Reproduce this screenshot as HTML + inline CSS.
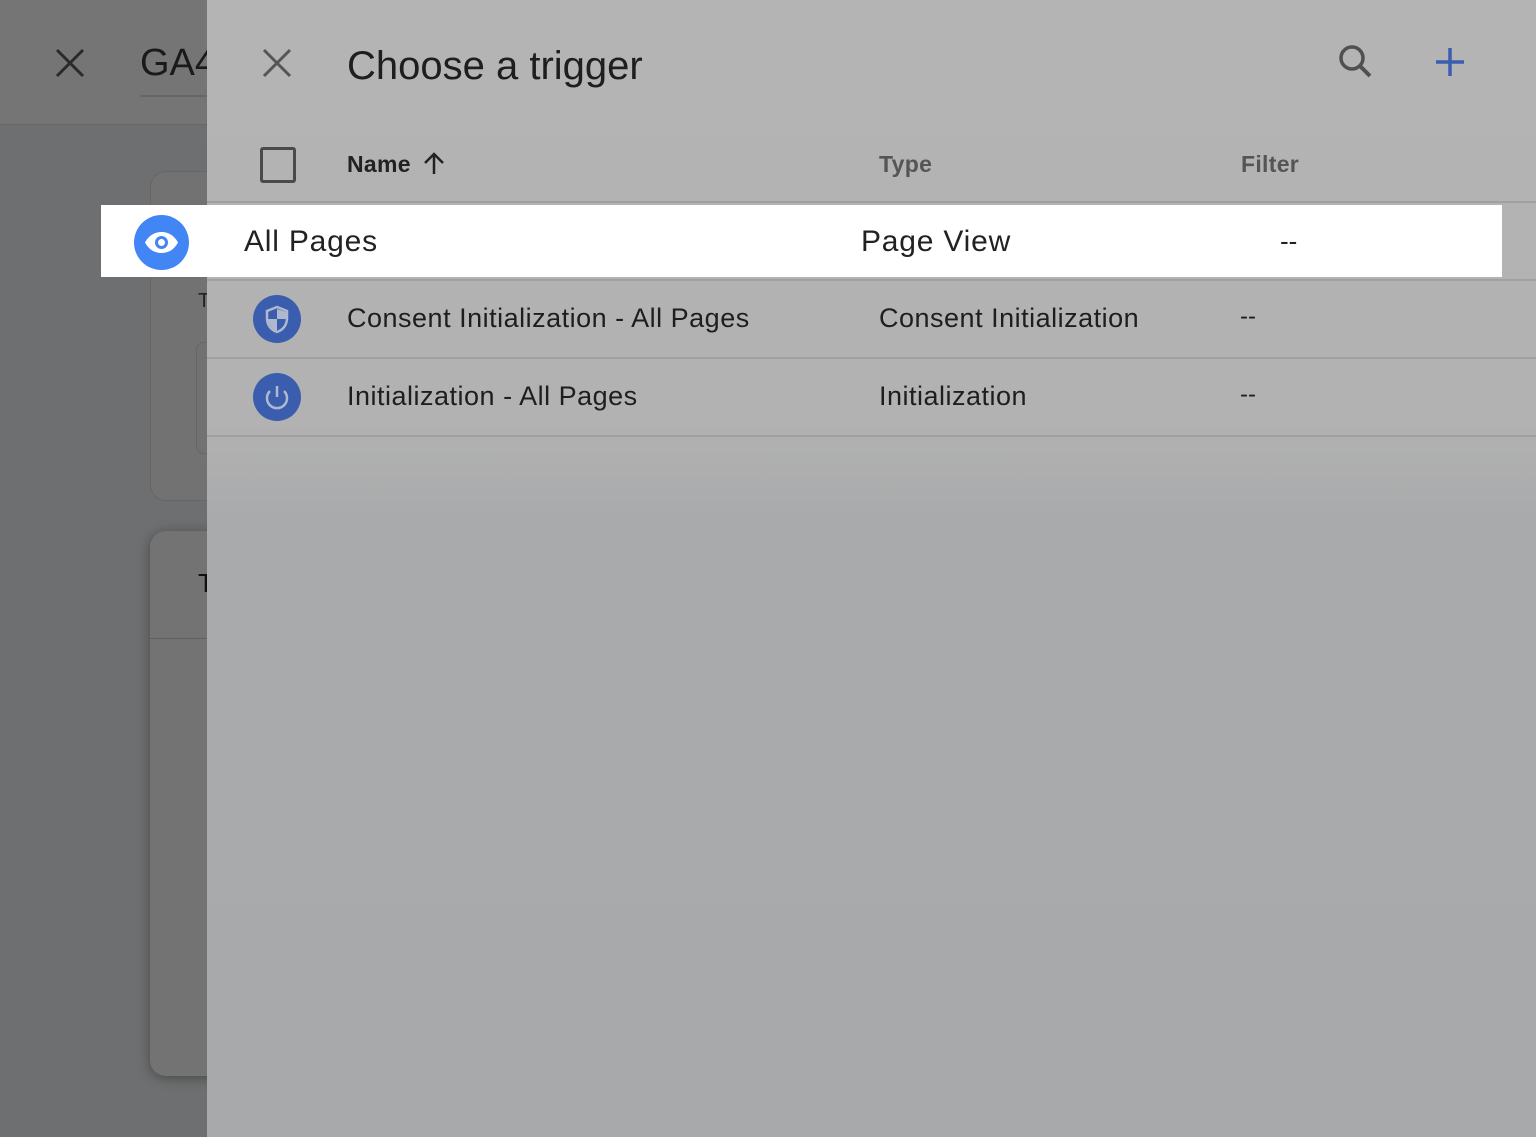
<!DOCTYPE html>
<html><head><meta charset="utf-8"><style>
html,body{margin:0;padding:0;width:1536px;height:1137px;overflow:hidden;font-family:"Liberation Sans",sans-serif;}
body{position:relative;background:#6e6f70;}
.abs{position:absolute;}
</style></head><body>
<div class="abs" style="left:0;top:0;width:207px;height:124px;background:#757575;border-bottom:1px solid #666;"></div>
<svg class="abs" style="left:52px;top:45px" width="36" height="36" viewBox="0 0 36 36"><path d="M5 5L31 31M31 5L5 31" stroke="#2a2a2a" stroke-width="3"/></svg>
<div class="abs" style="left:140px;top:42px;font-size:38px;color:#1a1a1a;">GA4</div>
<div class="abs" style="left:140px;top:95px;width:67px;height:2px;background:#666;"></div>
<div class="abs" style="left:150px;top:171px;width:80px;height:328px;border:1px solid #666;border-radius:16px;background:#727272;"></div>
<div class="abs" style="left:196px;top:342px;width:30px;height:110px;border:1px solid #666;border-radius:8px;"></div>
<div class="abs" style="left:198px;top:290px;font-size:20px;color:#222;">T</div>
<div class="abs" style="left:150px;top:531px;width:80px;height:545px;border-radius:16px;background:#737373;box-shadow:0 2px 12px rgba(0,0,0,.35);"></div>
<div class="abs" style="left:150px;top:638px;width:60px;height:1px;background:#5f5f5f;"></div>
<div class="abs" style="left:198px;top:568px;font-size:26px;color:#111;">T</div>
<div class="abs" style="left:207px;top:0;width:1329px;height:1137px;background:linear-gradient(#b4b4b4 0,#b2b2b2 420px,#a9aaab 520px,#a8a9ab 100%);"></div>
<svg class="abs" style="left:259px;top:45px" width="36" height="36" viewBox="0 0 36 36"><path d="M5 5L31 31M31 5L5 31" stroke="#555" stroke-width="3"/></svg>
<div class="abs" style="left:347px;top:44px;font-size:40px;color:#1e1e1e;">Choose a trigger</div>
<svg class="abs" style="left:1336px;top:42px" width="40" height="40" viewBox="0 0 40 40"><circle cx="16" cy="16" r="11" fill="none" stroke="#505050" stroke-width="3.5"/><path d="M24 24L34 34" stroke="#505050" stroke-width="4"/></svg>
<svg class="abs" style="left:1432px;top:44px" width="36" height="36" viewBox="0 0 36 36"><path d="M18 4V32M4 18H32" stroke="#3a5ead" stroke-width="3.5"/></svg>
<div class="abs" style="left:260px;top:147px;width:30px;height:30px;border:3px solid #4a4a4a;border-radius:3px;"></div>
<div class="abs" style="left:347px;top:151px;font-size:23px;font-weight:bold;color:#222;letter-spacing:0.3px;">Name</div>
<svg class="abs" style="left:422px;top:150px" width="24" height="26" viewBox="0 0 24 26"><path d="M12 24V4M3 13L12 4L21 13" stroke="#222" stroke-width="2.5" fill="none"/></svg>
<div class="abs" style="left:879px;top:151px;font-size:23px;font-weight:bold;color:#555;letter-spacing:0.3px;">Type</div>
<div class="abs" style="left:1241px;top:151px;font-size:23px;font-weight:bold;color:#555;letter-spacing:0.3px;">Filter</div>
<div class="abs" style="left:207px;top:201px;width:1329px;height:2px;background:#a0a0a0;"></div>
<div class="abs" style="left:207px;top:279px;width:1329px;height:2px;background:#a0a0a0;"></div>
<div class="abs" style="left:207px;top:357px;width:1329px;height:2px;background:#a0a0a0;"></div>
<div class="abs" style="left:207px;top:435px;width:1329px;height:2px;background:#a0a0a0;"></div>
<svg class="abs" style="left:253px;top:295px" width="48" height="48" viewBox="0 0 48 48"><circle cx="24" cy="24" r="24" fill="#3a5dad"/><path d="M24 12L14 16V23C14 30 18 35 24 37C30 35 34 30 34 23V16Z" fill="none" stroke="#b0b8d0" stroke-width="2.5"/><path d="M24 24H33V23L33 17L24 14ZM24 24H15C16 30 19 34 24 36Z" fill="#b0b8d0"/></svg>
<div class="abs" style="left:347px;top:303px;font-size:27px;color:#1e1e1e;letter-spacing:0.5px;">Consent Initialization - All Pages</div>
<div class="abs" style="left:879px;top:303px;font-size:27px;color:#1e1e1e;letter-spacing:0.5px;">Consent Initialization</div>
<div class="abs" style="left:1240px;top:303px;font-size:24px;color:#1e1e1e;">--</div>
<svg class="abs" style="left:253px;top:373px" width="48" height="48" viewBox="0 0 48 48"><circle cx="24" cy="24" r="24" fill="#3a5dad"/><path d="M17 18A10 10 0 1 0 31 18" fill="none" stroke="#b0b8d0" stroke-width="2.5"/><path d="M24 13V24" stroke="#b0b8d0" stroke-width="2.5"/></svg>
<div class="abs" style="left:347px;top:381px;font-size:27px;color:#1e1e1e;letter-spacing:0.5px;">Initialization - All Pages</div>
<div class="abs" style="left:879px;top:381px;font-size:27px;color:#1e1e1e;letter-spacing:0.5px;">Initialization</div>
<div class="abs" style="left:1240px;top:381px;font-size:24px;color:#1e1e1e;">--</div>
<div class="abs" style="left:101px;top:205px;width:1401px;height:72px;background:#fff;"></div>
<svg class="abs" style="left:134px;top:215px" width="55" height="55" viewBox="0 0 55 55"><circle cx="27.5" cy="27.5" r="27.5" fill="#4285f4"/><path d="M11 27.5C15 20 21 17 27.5 17C34 17 40 20 44 27.5C40 35 34 38 27.5 38C21 38 15 35 11 27.5Z" fill="#fff"/><circle cx="27.5" cy="27.5" r="6.5" fill="#4285f4"/><circle cx="27.5" cy="27.5" r="3.5" fill="#fff"/></svg>
<div class="abs" style="left:244px;top:225px;font-size:30px;color:#222;letter-spacing:0.8px;">All Pages</div>
<div class="abs" style="left:861px;top:225px;font-size:30px;color:#222;letter-spacing:0.8px;">Page View</div>
<div class="abs" style="left:1280px;top:226px;font-size:26px;color:#222;">--</div>
</body></html>
